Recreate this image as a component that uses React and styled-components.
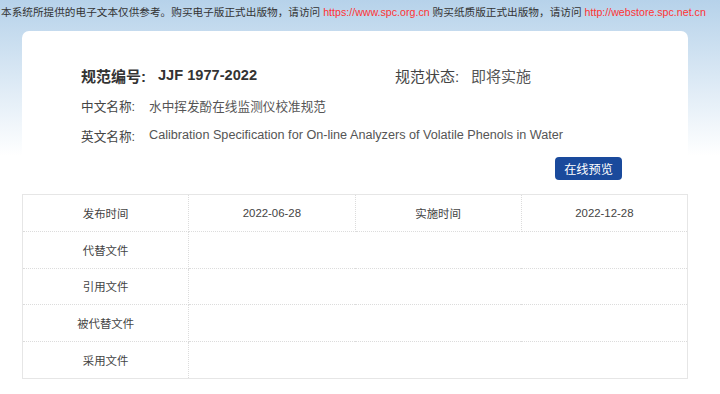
import React from "react";
import styled, { createGlobalStyle } from "styled-components";

const GlobalStyle = createGlobalStyle`
  html, body {
    margin: 0;
    padding: 0;
  }
  body {
    background: linear-gradient(to bottom, #b6d2ea 0, #ffffff 156px) no-repeat, #ffffff;
    font-family: "Liberation Sans", "Noto Sans CJK SC", sans-serif;
    color: #333;
  }
`;

const detail = {
  code: "JJF 1977-2022",
  status: "即将实施",
  cnName: "水中挥发酚在线监测仪校准规范",
  enName: "Calibration Specification for On-line Analyzers of Volatile Phenols in Water",
  published: "2022-06-28",
  effective: "2022-12-28",
};

const extraRows = ["代替文件", "引用文件", "被代替文件", "采用文件"];

const App = () => {
  return (
    <Page>
      <GlobalStyle />
      <Notice>
        本系统所提供的电子文本仅供参考。购买电子版正式出版物，请访问{" "}
        <NoticeLink href="#">https://www.spc.org.cn</NoticeLink> 购买纸质版正式出版物，请访问{" "}
        <NoticeLink href="#">http://webstore.spc.net.cn</NoticeLink>
      </Notice>
      <Card>
        <Info>
          <TitleRow>
            <TitleGroup>
              <TitleLabel>规范编号:</TitleLabel>
              <TitleValue>{detail.code}</TitleValue>
            </TitleGroup>
            <TitleGroup>
              <StatusLabel>规范状态:</StatusLabel>
              <StatusValue>{detail.status}</StatusValue>
            </TitleGroup>
          </TitleRow>
          <NameRow>
            <NameLabel>中文名称:</NameLabel>
            <NameValue>{detail.cnName}</NameValue>
          </NameRow>
          <NameRow>
            <NameLabel>英文名称:</NameLabel>
            <NameValue>{detail.enName}</NameValue>
          </NameRow>
        </Info>
        <Actions>
          <PreviewButton>在线预览</PreviewButton>
        </Actions>
        <Table>
          <colgroup>
            <col />
            <col />
            <col />
            <col />
          </colgroup>
          <tbody>
            <tr>
              <Cell>发布时间</Cell>
              <Cell>{detail.published}</Cell>
              <Cell>实施时间</Cell>
              <Cell>{detail.effective}</Cell>
            </tr>
            {extraRows.map((label) => (
              <tr key={label}>
                <Cell>{label}</Cell>
                <Cell colSpan={3}></Cell>
              </tr>
            ))}
          </tbody>
        </Table>
      </Card>
    </Page>
  );
};

const Page = styled.div`
  width: 720px;
  min-height: 394px;
`;

const Notice = styled.div`
  height: 25px;
  padding-top: 5px;
  box-sizing: border-box;
  font-size: 10.65px;
  line-height: 14px;
  color: #333;
  white-space: nowrap;
  padding-left: 1px;
`;

const NoticeLink = styled.a`
  color: #ff3333;
  text-decoration: none;
`;

const Card = styled.div`
  margin: 6px 0 0 22px;
  width: 666px;
  background: #fff;
  border-radius: 7px;
`;

const Info = styled.div`
  padding: 29px 0 0 59px;
`;

const TitleRow = styled.div`
  display: flex;
  align-items: center;
  height: 30px;
`;

const TitleGroup = styled.div`
  display: flex;
  align-items: center;
  flex: 0 0 314px;
`;

const TitleLabel = styled.span`
  font-size: 15px;
  font-weight: bold;
  color: #333;
  width: 77px;
`;

const TitleValue = styled.span`
  font-size: 14.6px;
  font-weight: bold;
  color: #333;
`;

const StatusLabel = styled.span`
  font-size: 15px;
  color: #444;
  width: 76px;
`;

const StatusValue = styled.span`
  font-size: 15px;
  color: #555;
`;

const NameRow = styled.div`
  display: flex;
  align-items: center;
  height: 30px;
  font-size: 12.65px;
`;

const NameLabel = styled.span`
  width: 68px;
  color: #444;
`;

const NameValue = styled.span`
  color: #555;
`;

const Actions = styled.div`
  display: flex;
  justify-content: flex-end;
  padding: 7px 66px 0 0;
`;

const PreviewButton = styled.button`
  width: 67px;
  height: 23px;
  border: none;
  border-radius: 4px;
  background: #1a4a9c;
  color: #fff;
  font-family: "Liberation Sans", "Noto Sans CJK SC", sans-serif;
  font-size: 12.2px;
  padding: 0;
  cursor: pointer;
`;

const Table = styled.table`
  margin-top: 14px;
  width: 666px;
  table-layout: fixed;
  border-collapse: collapse;
  border: 1px solid #e6e6e6;

  col {
    width: 25%;
  }
`;

const Cell = styled.td`
  height: 35.8px;
  padding: 0;
  text-align: center;
  font-size: 11.4px;
  color: #444;
  border: 1px dotted #dcdcdc;
`;

export default App;
